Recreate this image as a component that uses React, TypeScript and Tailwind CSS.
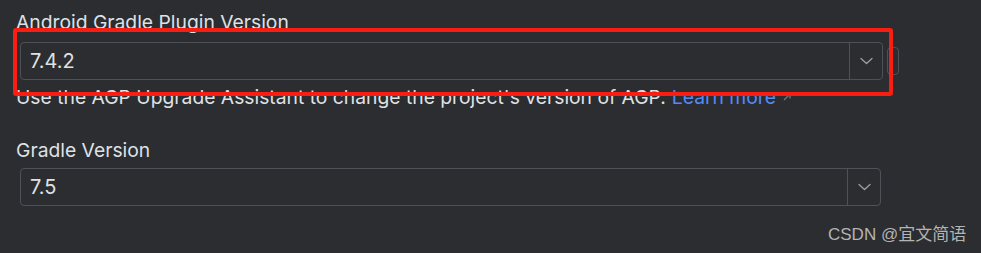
import React from 'react'

const FONT = { fontFamily: 'Inter, "Noto Sans", sans-serif' }

function Chevron() {
  return (
    <svg width="13" height="8" viewBox="0 0 13 8" fill="none">
      <path d="M1 1.5 L6.5 6.5 L12 1.5" stroke="#9da0a8" strokeWidth="1.3" strokeLinecap="round" strokeLinejoin="round" />
    </svg>
  )
}

function Combo({ value, width }: { value: string; width: string }) {
  return (
    <div className={`flex h-[38px] ${width} rounded-[4px] border border-[#4e5157] bg-[#2b2d30]`}>
      <div className="flex flex-1 items-center pl-[9px] text-[20px] text-[#dfe1e5]">{value}</div>
      <div className="flex w-[33px] items-center justify-center border-l border-[#4e5157]">
        <Chevron />
      </div>
    </div>
  )
}

export default function App() {
  return (
    <div className="relative h-[253px] w-[981px] overflow-hidden bg-[#2b2d30]" style={FONT}>
      <div className="pt-[11px] pl-[16px]">
        {/* AGP */}
        <p className="text-[19.3px] leading-[22px] text-[#dfe1e5]">Android Gradle Plugin Version</p>
        <div className="mt-[9px] ml-[4px] flex items-center">
          <Combo value="7.4.2" width="w-[863px]" />
          <div className="ml-[4px] h-[28px] w-[12px] rounded-[4px] border border-[#4e5157]" />
        </div>
        <p className="mt-[6px] flex items-center text-[19.3px] leading-[22px] text-[#dfe1e5]">
          Use the AGP Upgrade Assistant to change the project's version of AGP.
          <span className="ml-[6px] text-[#548af7]">Learn more</span>
          <svg className="ml-[6px]" width="10" height="10" viewBox="0 0 10 10" fill="none">
            <path d="M2 8 L8 2 M3.5 2 H8 V6.5" stroke="#6f737a" strokeWidth="1.4" />
          </svg>
        </p>

        {/* Gradle */}
        <p className="mt-[31px] text-[19.3px] leading-[22px] text-[#dfe1e5]">Gradle Version</p>
        <div className="mt-[7px] ml-[4px] flex">
          <Combo value="7.5" width="w-[861px]" />
        </div>
      </div>

      {/* annotation */}
      <div className="pointer-events-none absolute top-[28px] left-[13px] h-[68px] w-[880px] rounded-[3px] border-[4px] border-[#fa1e12]" />

      <div
        className="absolute top-[222px] left-[828px] text-[17px] text-[#b4b4b4]"
        style={{ fontFamily: '"Liberation Sans", "Noto Sans CJK SC", sans-serif' }}
      >
        CSDN @宜文简语
      </div>
    </div>
  )
}
